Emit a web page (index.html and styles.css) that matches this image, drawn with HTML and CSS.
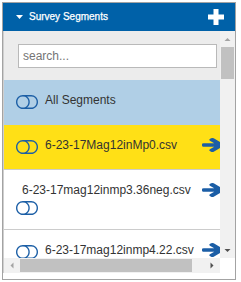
FILE: index.html
```html
<!DOCTYPE html>
<html>
<head>
<meta charset="utf-8">
<link rel="stylesheet" href="styles.css">
</head>
<body>
<div class="panel">
  <div class="header">
    <svg class="caret" viewBox="0 0 7 4"><polygon points="0,0 7,0 3.5,4"/></svg>
    <span class="title">Survey Segments</span>
    <svg class="plus" viewBox="0 0 16 16"><rect x="5.5" y="0" width="5" height="16"/><rect x="0" y="5.5" width="16" height="5"/></svg>
  </div>
  <div class="body">
    <div class="viewport">
      <div class="search"><input type="text" placeholder="search..."></div>

      <div class="row row-all">
        <div class="row-main">
          <svg class="toggle" viewBox="0 256 2048 1280" preserveAspectRatio="none"><path d="M1152 896q0-104-40.5-198.5t-109.5-163.5-163.5-109.5-198.5-40.5-198.5 40.5-163.5 109.5-109.5 163.5-40.5 198.5 40.5 198.5 109.5 163.5 163.5 109.5 198.5 40.5 198.5-40.5 163.5-109.5 109.5-163.5 40.5-198.5zm768 0q0-104-40.5-198.5t-109.5-163.5-163.5-109.5-198.5-40.5h-386q119 90 188.5 224t69.5 288-69.5 288-188.5 224h386q104 0 198.5-40.5t163.5-109.5 109.5-163.5 40.5-198.5zm128 0q0 130-51 248.5t-136.5 204-204 136.5-248.5 51h-768q-130 0-248.5-51t-204-136.5-136.5-204-51-248.5 51-248.5 136.5-204 204-136.5 248.5-51h768q130 0 248.5 51t204 136.5 136.5 204 51 248.5z"/></svg>
          <span class="label">All Segments</span>
        </div>
      </div>

      <div class="row row-active">
        <div class="row-main">
          <svg class="toggle" viewBox="0 256 2048 1280" preserveAspectRatio="none"><path d="M1152 896q0-104-40.5-198.5t-109.5-163.5-163.5-109.5-198.5-40.5-198.5 40.5-163.5 109.5-109.5 163.5-40.5 198.5 40.5 198.5 109.5 163.5 163.5 109.5 198.5 40.5 198.5-40.5 163.5-109.5 109.5-163.5 40.5-198.5zm768 0q0-104-40.5-198.5t-109.5-163.5-163.5-109.5-198.5-40.5h-386q119 90 188.5 224t69.5 288-69.5 288-188.5 224h386q104 0 198.5-40.5t163.5-109.5 109.5-163.5 40.5-198.5zm128 0q0 130-51 248.5t-136.5 204-204 136.5-248.5 51h-768q-130 0-248.5-51t-204-136.5-136.5-204-51-248.5 51-248.5 136.5-204 204-136.5 248.5-51h768q130 0 248.5 51t204 136.5 136.5 204 51 248.5z"/></svg>
          <span class="label">6-23-17Mag12inMp0.csv</span>
        </div>
        <svg class="arrow" viewBox="0 53 1472 1558" preserveAspectRatio="none"><path d="M1472 832q0 54-37 91l-651 651q-39 37-91 37-51 0-90-37l-75-75q-38-38-38-91t38-91l293-293h-704q-52 0-84.5-37.5t-32.5-90.5v-128q0-53 32.5-90.5t84.5-37.5h704l-293-294q-38-36-38-90t38-90l75-75q38-38 90-38 53 0 91 38l651 651q37 35 37 90z"/></svg>
      </div>

      <div class="row row-wrap">
        <div class="row-main stack">
          <span class="label">6-23-17mag12inmp3.36neg.csv</span>
          <svg class="toggle" viewBox="0 256 2048 1280" preserveAspectRatio="none"><path d="M1152 896q0-104-40.5-198.5t-109.5-163.5-163.5-109.5-198.5-40.5-198.5 40.5-163.5 109.5-109.5 163.5-40.5 198.5 40.5 198.5 109.5 163.5 163.5 109.5 198.5 40.5 198.5-40.5 163.5-109.5 109.5-163.5 40.5-198.5zm768 0q0-104-40.5-198.5t-109.5-163.5-163.5-109.5-198.5-40.5h-386q119 90 188.5 224t69.5 288-69.5 288-188.5 224h386q104 0 198.5-40.5t163.5-109.5 109.5-163.5 40.5-198.5zm128 0q0 130-51 248.5t-136.5 204-204 136.5-248.5 51h-768q-130 0-248.5-51t-204-136.5-136.5-204-51-248.5 51-248.5 136.5-204 204-136.5 248.5-51h768q130 0 248.5 51t204 136.5 136.5 204 51 248.5z"/></svg>
        </div>
        <svg class="arrow" viewBox="0 53 1472 1558" preserveAspectRatio="none"><path d="M1472 832q0 54-37 91l-651 651q-39 37-91 37-51 0-90-37l-75-75q-38-38-38-91t38-91l293-293h-704q-52 0-84.5-37.5t-32.5-90.5v-128q0-53 32.5-90.5t84.5-37.5h704l-293-294q-38-36-38-90t38-90l75-75q38-38 90-38 53 0 91 38l651 651q37 35 37 90z"/></svg>
      </div>

      <div class="row">
        <div class="row-main">
          <svg class="toggle" viewBox="0 256 2048 1280" preserveAspectRatio="none"><path d="M1152 896q0-104-40.5-198.5t-109.5-163.5-163.5-109.5-198.5-40.5-198.5 40.5-163.5 109.5-109.5 163.5-40.5 198.5 40.5 198.5 109.5 163.5 163.5 109.5 198.5 40.5 198.5-40.5 163.5-109.5 109.5-163.5 40.5-198.5zm768 0q0-104-40.5-198.5t-109.5-163.5-163.5-109.5-198.5-40.5h-386q119 90 188.5 224t69.5 288-69.5 288-188.5 224h386q104 0 198.5-40.5t163.5-109.5 109.5-163.5 40.5-198.5zm128 0q0 130-51 248.5t-136.5 204-204 136.5-248.5 51h-768q-130 0-248.5-51t-204-136.5-136.5-204-51-248.5 51-248.5 136.5-204 204-136.5 248.5-51h768q130 0 248.5 51t204 136.5 136.5 204 51 248.5z"/></svg>
          <span class="label">6-23-17mag12inmp4.22.csv</span>
        </div>
        <svg class="arrow" viewBox="0 53 1472 1558" preserveAspectRatio="none"><path d="M1472 832q0 54-37 91l-651 651q-39 37-91 37-51 0-90-37l-75-75q-38-38-38-91t38-91l293-293h-704q-52 0-84.5-37.5t-32.5-90.5v-128q0-53 32.5-90.5t84.5-37.5h704l-293-294q-38-36-38-90t38-90l75-75q38-38 90-38 53 0 91 38l651 651q37 35 37 90z"/></svg>
      </div>
    </div>

    <div class="vscroll">
      <div class="sbtn"><svg viewBox="0 0 15 15"><polygon class="off" points="4.5,10 10.5,10 7.5,7"/></svg></div>
      <div class="vthumb"></div>
      <div class="sfill"></div>
      <div class="sbtn"><svg viewBox="0 0 15 15"><polygon points="4.5,6 10.5,6 7.5,9"/></svg></div>
    </div>
    <div class="hscroll">
      <div class="sbtn"><svg viewBox="0 0 15 15"><polygon class="off" points="9.5,4.5 9.5,10.5 6.5,7.5"/></svg></div>
      <div class="hthumb"></div>
      <div class="sfill"></div>
      <div class="sbtn"><svg viewBox="0 0 15 15"><polygon points="5.5,4.5 5.5,10.5 8.5,7.5"/></svg></div>
    </div>
    <div class="corner"></div>
  </div>
  <div class="foot"></div>
</div>
</body>
</html>
```

FILE: styles.css
```css
body {
  margin: 0;
  background: #ffffff;
  font-family: "Liberation Sans", Arial, sans-serif;
}

.panel {
  margin: 2px 0 0 2px;
  width: 232px;
  border: 1px solid #a3a3a3;
  background: #ffffff;
}

.header {
  height: 28px;
  background: #0061a8;
  display: flex;
  align-items: center;
  padding: 0 11px 0 13px;
  color: #ffffff;
}

.caret {
  width: 7px;
  height: 4px;
  fill: #ffffff;
  margin-right: 6px;
  flex: none;
}

.title {
  flex: 1;
  font-size: 10px;
  line-height: 12px;
  -webkit-text-stroke: 0.25px #ffffff;
}

.plus {
  width: 16px;
  height: 16px;
  fill: #ffffff;
  flex: none;
}

.body {
  display: grid;
  grid-template-columns: 216px 15px;
  grid-template-rows: 227px 15px;
  border-left: 1px solid #cfcfcf;
}

.viewport {
  overflow: hidden;
}

.search {
  background: #ececec;
  padding: 13px 0 12px 14px;
}

.search input {
  display: block;
  width: 199px;
  height: 24px;
  box-sizing: border-box;
  margin: 0;
  padding: 0 4px;
  border: 1px solid #b9b9b9;
  background: #ffffff;
  font: 12px "Liberation Sans", Arial, sans-serif;
  color: #333333;
  outline: none;
}

.search input::placeholder {
  color: #757575;
}

.row {
  display: grid;
  grid-template-columns: 186px 22px;
  padding: 13px 0 17px 12px;
  border-bottom: 1px solid #cccccc;
  background: #ffffff;
  font-size: 12px;
  line-height: 14px;
  color: #333333;
  white-space: nowrap;
}

.row-all {
  background: #b0cfe6;
  border-bottom-color: #b0cfe6;
}

.row-active {
  background: #ffe016;
}

.row-wrap {
  padding-bottom: 14px;
}

.row-main {
  display: flex;
  align-items: flex-start;
  height: 14px;
}

.row-main.stack {
  flex-direction: column;
  height: auto;
}

.toggle {
  width: 22px;
  height: 14px;
  margin: 2px 0 -2px;
  flex: none;
  fill: #1c5fa6;
}

.label {
  margin-left: 7px;
}

.stack .label {
  margin-left: 6px;
}

.stack .toggle {
  margin: 4px 0 0;
}

.arrow {
  width: 22px;
  height: 14px;
  margin-top: 0;
  fill: #1b5ea6;
}

.vscroll {
  background: #f1f1f1;
  display: flex;
  flex-direction: column;
}

.hscroll {
  background: #f1f1f1;
  display: flex;
}

.sbtn {
  width: 15px;
  height: 15px;
  flex: none;
}

.sbtn svg {
  display: block;
  width: 15px;
  height: 15px;
  fill: #505050;
}

.sbtn .off {
  fill: #a3a3a3;
}

.sfill {
  flex: 1;
}

.vthumb {
  height: 32px;
  margin: 1px 1px 0;
  background: #c1c1c1;
}

.hthumb {
  width: 172px;
  margin: 1px 0 1px 1px;
  background: #c1c1c1;
}

.corner {
  background: #ffffff;
}

.foot {
  height: 6px;
}
```
